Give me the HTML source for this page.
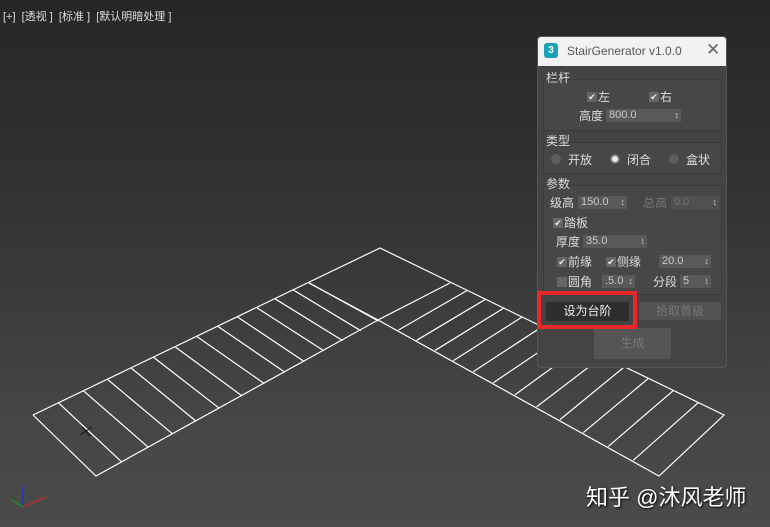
<!DOCTYPE html>
<html><head><meta charset="utf-8"><style>
*{margin:0;padding:0;box-sizing:border-box}
body{width:770px;height:527px;overflow:hidden;position:relative;background:linear-gradient(#262626 0%,#343434 40%,#464646 80%,#4b4b4b 100%);font-family:"Liberation Sans","Noto Sans CJK SC",sans-serif}
.a{position:absolute;white-space:nowrap;z-index:2}
.t{color:#ddd;font-size:12px;line-height:14px}
#dlg{position:absolute;left:537px;top:36px;width:190px;height:332px;background:#444;border-radius:4px;overflow:hidden;border:1px solid #555}
#tb{position:absolute;left:0;top:0;width:190px;height:29px;background:#f2f2f2}
.grp{position:absolute;border:1px solid #3a3a3a;border-radius:2px;background:#474747;z-index:1}
.sp{position:absolute;height:13px;background:#595959;color:#ccc;font-size:11px;line-height:13px;padding-left:3px;z-index:2}
.sp:after{content:"\2195";position:absolute;right:2px;top:0;font-size:9px;color:#ccc}
.cb{position:absolute;width:10px;height:10px;background:#666;color:#eee;font-size:9px;line-height:10px;text-align:center;z-index:2}
.rd{position:absolute;width:10px;height:10px;border-radius:50%;background:#5e5e5e;z-index:2}
</style></head><body>
<div class="a" style="left:3px;top:8px;font-size:11px;color:#ddd">[+]&nbsp; [透视 ]&nbsp; [标准 ]&nbsp; [默认明暗处理 ]</div>
<svg id="sv" width="770" height="527" style="position:absolute;left:0;top:0" stroke="#fff" stroke-width="1.2" fill="none"></svg>
<div id="dlg">
 <div id="tb">
  <div class="a" style="left:6px;top:6px;width:14px;height:15px;background:#1aa3b8;border-radius:3px;color:#fff;font-size:10px;font-weight:bold;text-align:center;line-height:15px">3</div>
  <div class="a" style="left:29px;top:7px;font-size:12px;color:#555">StairGenerator v1.0.0</div>
  <div class="a" style="left:168px;top:3px;font-size:17px;color:#666">✕</div>
 </div>
 <div class="a t" style="left:8px;top:34px">栏杆</div>
 <div class="grp" style="left:5px;top:42px;width:179px;height:52px"></div>
 <div class="cb" style="left:49px;top:55px">✔</div><div class="a t" style="left:60px;top:53px">左</div>
 <div class="cb" style="left:111px;top:55px">✔</div><div class="a t" style="left:122px;top:53px">右</div>
 <div class="a t" style="left:41px;top:72px">高度</div><div class="sp" style="left:68px;top:72px;width:75px">800.0</div>
 <div class="a t" style="left:8px;top:97px">类型</div>
 <div class="grp" style="left:5px;top:105px;width:179px;height:32px"></div>
 <div class="rd" style="left:13px;top:117px"></div><div class="a t" style="left:30px;top:116px">开放</div>
 <div class="rd" style="left:72px;top:117px;background:radial-gradient(#eee 30%,#666 60%)"></div><div class="a t" style="left:89px;top:116px">闭合</div>
 <div class="rd" style="left:131px;top:117px"></div><div class="a t" style="left:148px;top:116px">盒状</div>
 <div class="a t" style="left:8px;top:140px">参数</div>
 <div class="grp" style="left:5px;top:148px;width:179px;height:110px"></div>
 <div class="a t" style="left:12px;top:159px">级高</div><div class="sp" style="left:40px;top:159px;width:49px">150.0</div>
 <div class="a t" style="left:105px;top:159px;color:#777">总高</div><div class="sp" style="left:133px;top:159px;width:48px;background:#505050;color:#777">0.0</div>
 <div class="cb" style="left:15px;top:181px">✔</div><div class="a t" style="left:26px;top:179px">踏板</div>
 <div class="a t" style="left:18px;top:198px">厚度</div><div class="sp" style="left:45px;top:198px;width:64px">35.0</div>
 <div class="cb" style="left:19px;top:220px">✔</div><div class="a t" style="left:30px;top:218px">前缘</div>
 <div class="cb" style="left:68px;top:220px">✔</div><div class="a t" style="left:79px;top:218px">侧缘</div>
 <div class="sp" style="left:121px;top:218px;width:52px">20.0</div>
 <div class="cb" style="left:19px;top:240px"></div><div class="a t" style="left:30px;top:238px">圆角</div>
 <div class="sp" style="left:64px;top:238px;width:33px">.5.0</div>
 <div class="a t" style="left:115px;top:238px">分段</div><div class="sp" style="left:142px;top:238px;width:31px">5</div>
 <div class="a" style="left:8px;top:265px;width:83px;height:19px;background:#2e2e2e;color:#eee;font-size:12px;text-align:center;line-height:19px">设为台阶</div>
 <div class="a" style="left:101px;top:265px;width:82px;height:18px;background:#525252;color:#777;font-size:12px;text-align:center;line-height:18px;border-radius:2px">拾取首级</div>
 <div class="a" style="left:56px;top:291px;width:77px;height:31px;background:#555;color:#777;font-size:12px;text-align:center;line-height:31px;border-radius:2px">生成</div>
</div>
<div class="a" style="left:537px;top:291px;width:100px;height:38px;border:4px solid #e8282c"></div>
<div class="a" style="left:586px;top:480px;font-size:22px;color:#fff;text-shadow:1px 1px 2px #000">知乎 @沐风老师</div>
<script>
var s=document.getElementById('sv'),h='';
function L(a,b,c,d){h+='<line x1="'+a+'" y1="'+b+'" x2="'+c+'" y2="'+d+'"/>';}
function P(p){h+='<polyline points="'+p+'"/>';}
P('33,415 96,476 378,320 659,476 724,415 380,248 33,415');
P('309,283 378,320 450,283');
var lt=[115,190,262,333,400,465,530,593,652,710,765,820,866],lb=[305,385,458,528,598,666,733,795,853,912,968,1022,1075];
for(var i=0;i<lt.length;i++){var x1=lt[i],y1=525-(x1-38)*397/828,x2=lb[i],y2=708-(x2-228)*465/847;L(20+x1/3,240+y1/3,20+x2/3,240+y2/3);}
var rb=[85,140,195,250,310,370,435,500,570,640,715,790],rt=[290,345,400,455,515,575,635,698,763,835,910,985];
for(var i=0;i<rb.length;i++){var x1=rt[i],y1=128+(x1-240)*397/822,x2=rb[i],y2=240+(x2-30)*465/840;L(370+x1/3,240+y1/3,370+x2/3,240+y2/3);}
h+='<g stroke="#111" stroke-width="1"><line x1="80" y1="435" x2="92" y2="427"/><line x1="82" y1="427" x2="90" y2="436"/></g>';
h+='<line x1="23" y1="507" x2="23" y2="486" stroke="#2233cc" stroke-width="1.5"/><line x1="23" y1="507" x2="46" y2="497" stroke="#b03030" stroke-width="1.5"/><line x1="23" y1="507" x2="12" y2="500" stroke="#2a8a2a" stroke-width="1.5"/>';
s.innerHTML=h;
</script>
</body></html>
